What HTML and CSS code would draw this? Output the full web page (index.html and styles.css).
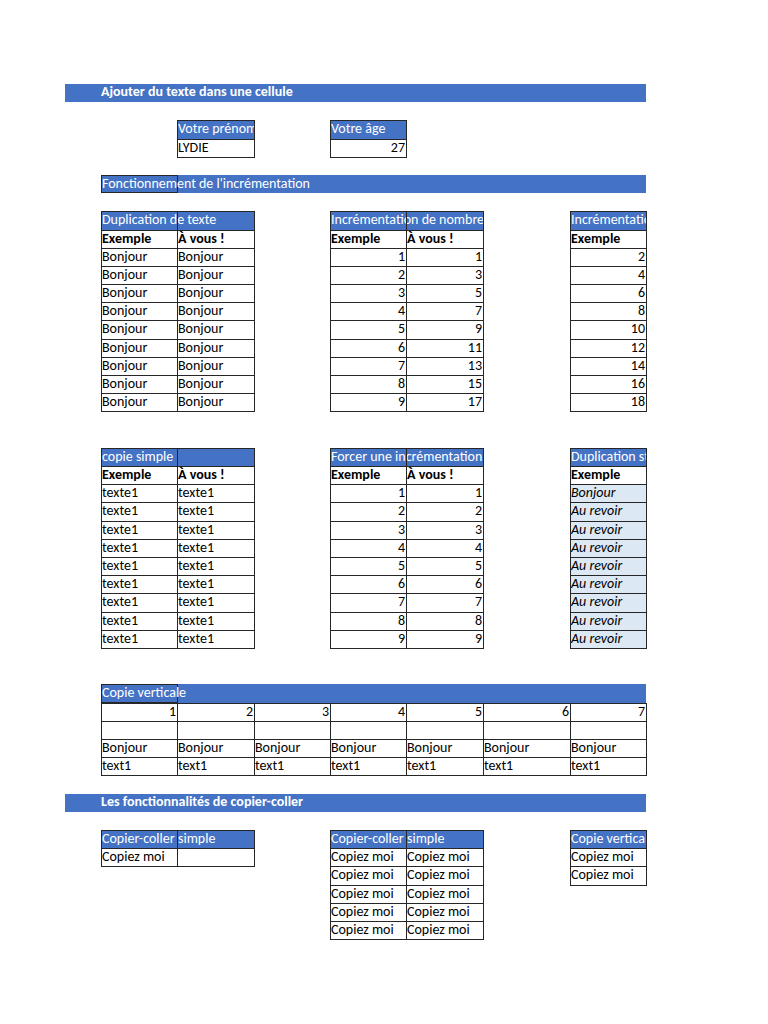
FILE: index.html
```html
<!DOCTYPE html>
<html lang="fr">
<head>
<meta charset="utf-8">
<title>Feuille</title>
<link rel="stylesheet" href="styles.css">
</head>
<body>
<div class="sheet">

  <div class="band h1">
    <div class="banner bold span-all">Ajouter du texte dans une cellule</div>
  </div>

  <div class="band h2 mt1">
    <div class="tbl one-c at-c">
      <div class="th"><span class="th-a">Votre prénom</span></div>
      <div class="c">LYDIE</div>
    </div>
    <div class="tbl one at-e">
      <div class="th"><span class="th-a">Votre âge</span></div>
      <div class="c num">27</div>
    </div>
  </div>

  <div class="band h1 mt1">
    <div class="banner span-bh"><span class="box">Fonctionnement de l'incrémentation</span></div>
  </div>

  <div class="band h11 mt1">
    <div class="tbl two at-b">
      <div class="th"><span class="th-a">Duplication de texte</span><span class="th-b"></span></div>
      <div class="c b">Exemple</div><div class="c b">À vous !</div>
      <div class="c">Bonjour</div><div class="c">Bonjour</div>
      <div class="c">Bonjour</div><div class="c">Bonjour</div>
      <div class="c">Bonjour</div><div class="c">Bonjour</div>
      <div class="c">Bonjour</div><div class="c">Bonjour</div>
      <div class="c">Bonjour</div><div class="c">Bonjour</div>
      <div class="c">Bonjour</div><div class="c">Bonjour</div>
      <div class="c">Bonjour</div><div class="c">Bonjour</div>
      <div class="c">Bonjour</div><div class="c">Bonjour</div>
      <div class="c">Bonjour</div><div class="c">Bonjour</div>
    </div>
    <div class="tbl two at-e">
      <div class="th"><span class="th-a">Incrémentation de nombre</span><span class="th-b"></span></div>
      <div class="c b">Exemple</div><div class="c b">À vous !</div>
      <div class="c num">1</div><div class="c num">1</div>
      <div class="c num">2</div><div class="c num">3</div>
      <div class="c num">3</div><div class="c num">5</div>
      <div class="c num">4</div><div class="c num">7</div>
      <div class="c num">5</div><div class="c num">9</div>
      <div class="c num">6</div><div class="c num">11</div>
      <div class="c num">7</div><div class="c num">13</div>
      <div class="c num">8</div><div class="c num">15</div>
      <div class="c num">9</div><div class="c num">17</div>
    </div>
    <div class="tbl one at-h">
      <div class="th"><span class="th-a">Incrémentation de nombres pairs</span></div>
      <div class="c b">Exemple</div>
      <div class="c num">2</div>
      <div class="c num">4</div>
      <div class="c num">6</div>
      <div class="c num">8</div>
      <div class="c num">10</div>
      <div class="c num">12</div>
      <div class="c num">14</div>
      <div class="c num">16</div>
      <div class="c num">18</div>
    </div>
  </div>

  <div class="band h11 mt2">
    <div class="tbl two at-b">
      <div class="th"><span class="th-a">copie simple</span><span class="th-b"></span></div>
      <div class="c b">Exemple</div><div class="c b">À vous !</div>
      <div class="c">texte1</div><div class="c">texte1</div>
      <div class="c">texte1</div><div class="c">texte1</div>
      <div class="c">texte1</div><div class="c">texte1</div>
      <div class="c">texte1</div><div class="c">texte1</div>
      <div class="c">texte1</div><div class="c">texte1</div>
      <div class="c">texte1</div><div class="c">texte1</div>
      <div class="c">texte1</div><div class="c">texte1</div>
      <div class="c">texte1</div><div class="c">texte1</div>
      <div class="c">texte1</div><div class="c">texte1</div>
    </div>
    <div class="tbl two at-e">
      <div class="th"><span class="th-a">Forcer une incrémentation</span><span class="th-b"></span></div>
      <div class="c b">Exemple</div><div class="c b">À vous !</div>
      <div class="c num">1</div><div class="c num">1</div>
      <div class="c num">2</div><div class="c num">2</div>
      <div class="c num">3</div><div class="c num">3</div>
      <div class="c num">4</div><div class="c num">4</div>
      <div class="c num">5</div><div class="c num">5</div>
      <div class="c num">6</div><div class="c num">6</div>
      <div class="c num">7</div><div class="c num">7</div>
      <div class="c num">8</div><div class="c num">8</div>
      <div class="c num">9</div><div class="c num">9</div>
    </div>
    <div class="tbl one at-h">
      <div class="th"><span class="th-a">Duplication style</span></div>
      <div class="c b">Exemple</div>
      <div class="c it">Bonjour</div>
      <div class="c it">Au revoir</div>
      <div class="c it">Au revoir</div>
      <div class="c it">Au revoir</div>
      <div class="c it">Au revoir</div>
      <div class="c it">Au revoir</div>
      <div class="c it">Au revoir</div>
      <div class="c it">Au revoir</div>
      <div class="c it">Au revoir</div>
    </div>
  </div>

  <div class="band h5 mt2">
    <div class="vblock span-bh">
      <div class="banner"><span class="box">Copie verticale</span></div>
      <div class="tbl seven">
        <div class="c num">1</div><div class="c num">2</div><div class="c num">3</div><div class="c num">4</div><div class="c num">5</div><div class="c num">6</div><div class="c num">7</div>
        <div class="c"></div><div class="c"></div><div class="c"></div><div class="c"></div><div class="c"></div><div class="c"></div><div class="c"></div>
        <div class="c">Bonjour</div><div class="c">Bonjour</div><div class="c">Bonjour</div><div class="c">Bonjour</div><div class="c">Bonjour</div><div class="c">Bonjour</div><div class="c">Bonjour</div>
        <div class="c">text1</div><div class="c">text1</div><div class="c">text1</div><div class="c">text1</div><div class="c">text1</div><div class="c">text1</div><div class="c">text1</div>
      </div>
    </div>
  </div>

  <div class="band h1 mt1">
    <div class="banner bold span-all">Les fonctionnalités de copier-coller</div>
  </div>

  <div class="band h6 mt1">
    <div class="tbl two at-b">
      <div class="th"><span class="th-a">Copier-coller</span><span class="th-b">simple</span></div>
      <div class="c">Copiez moi</div><div class="c"></div>
    </div>
    <div class="tbl two at-e">
      <div class="th"><span class="th-a">Copier-coller</span><span class="th-b">simple</span></div>
      <div class="c">Copiez moi</div><div class="c">Copiez moi</div>
      <div class="c">Copiez moi</div><div class="c">Copiez moi</div>
      <div class="c">Copiez moi</div><div class="c">Copiez moi</div>
      <div class="c">Copiez moi</div><div class="c">Copiez moi</div>
      <div class="c">Copiez moi</div><div class="c">Copiez moi</div>
    </div>
    <div class="tbl one at-h">
      <div class="th"><span class="th-a">Copie verticale</span></div>
      <div class="c">Copiez moi</div>
      <div class="c">Copiez moi</div>
    </div>
  </div>

</div>
</body>
</html>
```

FILE: styles.css
```css
:root {
  --r: 18.2px;
  --line: #262626;
  --blue: #4472c4;
  --light: #dde8f5;
}

* { box-sizing: border-box; }

body {
  margin: 0;
  background: #fff;
  color: #000;
  font-family: Carlito, Lato, "Liberation Sans", sans-serif;
  font-size: 14px;
}

.sheet {
  padding: 84px 0 60px 65px;
}

.band {
  display: grid;
  grid-template-columns: 36px 76px 77px 76px 76px 77px 87px 76px;
  align-items: start;
}

.h1 { height: var(--r); }
.h2 { height: calc(var(--r) * 2); }
.h5 { height: calc(var(--r) * 5); }
.h6 { height: calc(var(--r) * 6 + 1px); }
.h11 { height: calc(var(--r) * 11); }

.mt1 { margin-top: var(--r); }
.mt2 { margin-top: calc(var(--r) * 2); }

.at-b { grid-column: 2; }
.at-c { grid-column: 3; }
.at-e { grid-column: 5; }
.at-h { grid-column: 8; }
.span-all { grid-column: 1 / -1; width: 581px; }
.span-bh { grid-column: 2 / -1; }

.banner {
  height: var(--r);
  background: var(--blue);
  color: #fff;
  line-height: 16px;
  white-space: nowrap;
  width: 545px;
}

.banner.bold {
  width: 581px;
  font-weight: 700;
  padding-left: 36px;
}

.box {
  display: inline-block;
  width: 77px;
  height: var(--r);
  border: 1px solid var(--line);
  padding-left: 0;
  overflow: visible;
  line-height: 15px;
}

.tbl {
  display: grid;
  width: max-content;
  background: var(--line);
  padding: 1px;
  gap: 1px;
  grid-auto-rows: calc(var(--r) - 1px);
  justify-self: start;
}

.tbl.two { grid-template-columns: 75px 76px; }
.tbl.one { grid-template-columns: 75px; }
.tbl.one-c { grid-template-columns: 76px; }
.tbl.seven { grid-template-columns: 75px 76px 75px 75px 76px 86px 75px; }

.c {
  background: #fff;
  padding: 0;
  line-height: 16px;
  white-space: nowrap;
  overflow: hidden;
}

.c.num {
  text-align: right;
  padding-right: 1px;
}

.c.b { font-weight: 700; }

.c.it {
  font-style: italic;
  background: var(--light);
}

.th {
  grid-column: 1 / -1;
  display: flex;
  background: var(--blue);
  color: #fff;
  line-height: 16px;
  white-space: nowrap;
  overflow: hidden;
}

.th-a {
  flex: none;
  width: 75px;
  padding-left: 0;
}

.one-c .th-a { width: 76px; }

.th-b {
  flex: none;
  width: 77px;
  border-left: 1px solid var(--line);
  padding-left: 0;
  position: relative;
}

.vblock {
  display: flex;
  flex-direction: column;
}
```
